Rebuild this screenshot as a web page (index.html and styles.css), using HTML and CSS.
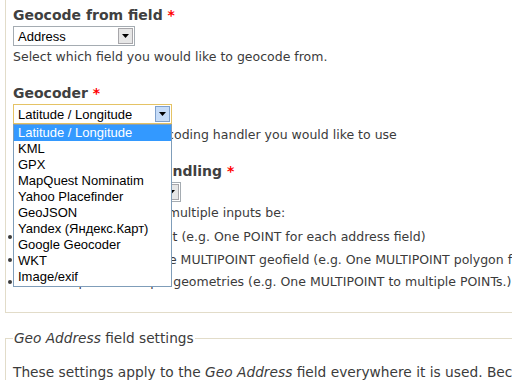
FILE: index.html
```html
<!DOCTYPE html>
<html>
<head>
<meta charset="utf-8">
<link rel="stylesheet" href="styles.css">
</head>
<body>
<div class="page">
  <div class="fs-top">
    <div class="item">
      <h3 class="label">Geocode from field <span class="req">*</span></h3>
      <div class="select sel-address">
        <span class="val">Address</span>
        <span class="btn"><svg width="7" height="4" viewBox="0 0 7 4"><path d="M0 0h7L3.5 4z" fill="#000"/></svg></span>
      </div>
      <p class="desc">Select which field you would like to geocode from.</p>
    </div>
    <div class="item">
      <h3 class="label">Geocoder <span class="req">*</span></h3>
      <div class="select-wrap">
        <div class="select sel-geocoder focused">
          <span class="val">Latitude / Longitude</span>
          <span class="btn"><svg width="7" height="4" viewBox="0 0 7 4"><path d="M0 0h7L3.5 4z" fill="#000"/></svg></span>
        </div>
        <ul class="dropdown">
          <li class="active">Latitude / Longitude</li>
          <li>KML</li>
          <li>GPX</li>
          <li>MapQuest Nominatim</li>
          <li>Yahoo Placefinder</li>
          <li>GeoJSON</li>
          <li>Yandex (Яндекс.Карт)</li>
          <li>Google Geocoder</li>
          <li>WKT</li>
          <li>Image/exif</li>
        </ul>
      </div>
      <p class="desc">Select which type of geocoding handler you would like to use</p>
    </div>
    <div class="item">
      <h3 class="label">Multi-value input handling <span class="req">*</span></h3>
      <div class="select sel-geometry">
        <span class="val">Match Multiples (default)</span>
        <span class="btn"><svg width="7" height="4" viewBox="0 0 7 4"><path d="M0 0h7L3.5 4z" fill="#000"/></svg></span>
      </div>
      <p class="desc">Should geometries from multiple inputs be:</p>
      <ul class="opts">
        <li>Matched with each input (e.g. One POINT for each address field)</li>
        <li>Aggregated into a single MULTIPOINT geofield (e.g. One MULTIPOINT polygon from multiple address fields)</li>
        <li>Broken up into multiple geometries (e.g. One MULTIPOINT to multiple POINTs.)</li>
      </ul>
    </div>
  </div>
  <fieldset class="fs2">
    <legend><em>Geo Address</em> field settings</legend>
    <p class="intro">These settings apply to the <em>Geo Address</em> field everywhere it is used. Because these settings affect stored data, some cannot be changed.</p>
  </fieldset>
</div>
</body>
</html>
```

FILE: styles.css
```css
html, body {
  margin: 0;
  padding: 0;
  background: #fff;
  overflow: hidden;
}
body {
  font-family: "DejaVu Sans", Verdana, sans-serif;
  font-size: 12.5px;
  color: #3b3b3b;
}
.page {
  width: 760px;
  padding-left: 5px;
}
.fs-top {
  border-left: 1px solid #e2dcc9;
  border-bottom: 1px solid #e2dcc9;
  padding: 0 0 22px 7px;
}
.label {
  margin: 0;
  font-size: 14px;
  font-weight: bold;
  color: #404040;
  line-height: 18px;
  padding-top: 6px;
}
.req {
  color: #f00;
}
.select {
  display: flex;
  align-items: center;
  justify-content: space-between;
  height: 20px;
  box-sizing: border-box;
  border: 1px solid #a5acb2;
  background: #fff;
  font-family: "Liberation Sans", Arial, sans-serif;
  font-size: 13px;
  color: #000;
  margin-top: 2px;
}
.val {
  padding-left: 4px;
  white-space: nowrap;
  overflow: hidden;
}
.btn {
  width: 15px;
  height: 16px;
  margin-right: 1px;
  box-sizing: border-box;
  border: 1px solid #a7a6aa;
  background: #e6e6e6;
  display: flex;
  align-items: center;
  justify-content: center;
  flex: none;
}
.sel-address { width: 122px; }
.sel-geocoder { width: 159px; }
.sel-geometry { width: 168px; }
.focused {
  border-color: #e5c365;
}
.focused .btn {
  background: #c6dcf8;
  border-color: #7ea0cc;
}
.select-wrap {
  position: relative;
}
.dropdown {
  position: absolute;
  left: 0;
  top: 20px;
  width: 159px;
  box-sizing: border-box;
  margin: 0;
  padding: 0 0 1px;
  list-style: none;
  background: #fff;
  border: 1px solid #7f9db9;
  font-family: "Liberation Sans", Arial, sans-serif;
  font-size: 13px;
  color: #000;
  z-index: 5;
}
.dropdown li {
  height: 16px;
  line-height: 16px;
  padding-left: 4px;
  white-space: nowrap;
}
.dropdown li.active {
  background: #3399ff;
  color: #fff;
}
.desc {
  margin: 3px 0 0;
  line-height: 16px;
  white-space: nowrap;
}
.item + .item {
  margin-top: 13px;
}
.opts {
  margin: 8px 0 0 -7px;
  padding: 0 0 0 17px;
  list-style: disc;
}
.opts li {
  line-height: 16px;
  margin-bottom: 6.5px;
  white-space: nowrap;
}
.opts li:last-child {
  margin-bottom: 0;
}
.fs2 {
  margin: 17px 0 0;
  padding: 0 0 0 7px;
  border: 1px solid #e2dcc9;
  border-right: none;
  border-bottom: none;
}
.fs2 legend {
  padding: 0 1px;
  font-size: 13.7px;
  line-height: 16px;
}
.intro {
  margin: 18px 0 0;
  font-size: 13.75px;
  line-height: 16px;
  white-space: nowrap;
}
```
